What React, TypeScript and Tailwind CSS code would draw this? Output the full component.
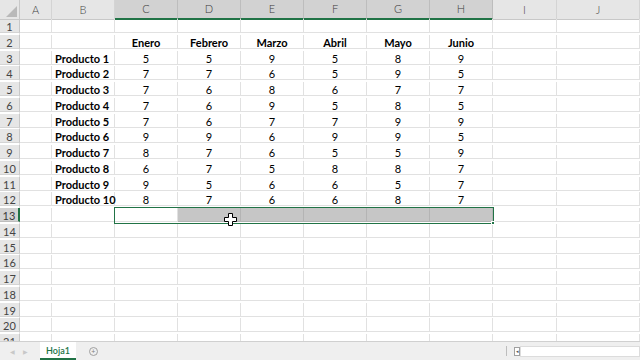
import React from "react";

const cols = ["A", "B", "C", "D", "E", "F", "G", "H", "I", "J", ""];
const months = ["Enero", "Febrero", "Marzo", "Abril", "Mayo", "Junio"];
const data = [
  [5, 5, 9, 5, 8, 9],
  [7, 7, 6, 5, 9, 5],
  [7, 6, 8, 6, 7, 7],
  [7, 6, 9, 5, 8, 5],
  [7, 6, 7, 7, 9, 9],
  [9, 9, 6, 9, 9, 5],
  [8, 7, 6, 5, 5, 9],
  [6, 7, 5, 8, 8, 7],
  [9, 5, 6, 6, 5, 7],
  [8, 7, 6, 6, 8, 7],
];

const gridCols = "grid grid-cols-[20px_32px_63px_63px_63px_63px_63px_63px_63px_64px_1fr]";

function cellContent(r: number, c: number): { text: string; bold?: boolean; left?: boolean } {
  if (r === 2 && c >= 2 && c <= 7) return { text: months[c - 2], bold: true };
  if (r >= 3 && r <= 12) {
    if (c === 1) return { text: `Producto ${r - 2}`, bold: true, left: true };
    if (c >= 2 && c <= 7) return { text: String(data[r - 3][c - 2]) };
  }
  return { text: "" };
}

export default function App() {
  const rows = Array.from({ length: 21 }, (_, i) => i + 1);
  return (
    <div className="w-[640px] h-[360px] overflow-hidden bg-white flex flex-col" style={{ fontFamily: "Lato, 'Open Sans', 'Liberation Sans', sans-serif" }}>
      <div className="relative h-[341px] overflow-hidden">
        <div className={`${gridCols} h-[19px] bg-[#e6e6e6]`}>
          <div className="relative border-r border-b border-[#c8c8c8]">
            <div className="absolute right-[2px] bottom-[2px] w-0 h-0 border-l-[11px] border-l-transparent border-b-[11px] border-b-[#b9b9b9]" />
          </div>
          {cols.map((c, i) => {
            const sel = i >= 2 && i <= 7;
            return (
              <div
                key={i}
                className={`flex items-center justify-center pt-[1px] text-[11px] font-light ${sel ? "bg-[#d2d2d2] text-[#3a3a3a] border-b-2 border-b-[#217346] border-r border-r-[#bdbdbd]" : "text-[#444] border-b border-b-[#c8c8c8] border-r border-r-[#d4d4d4]"}`}
              >
                {c}
              </div>
            );
          })}
        </div>
        {rows.map((r) => {
          const selRow = r === 13;
          return (
            <div key={r} className={`${gridCols} h-[15.75px]`}>
              <div
                className={`flex items-center justify-center pt-[2px] text-[11px] leading-none ${selRow ? "bg-[#d2d2d2] text-[#3a3a3a] border-r-2 border-r-[#217346] border-b border-b-[#bdbdbd]" : "bg-[#e6e6e6] text-[#444] border-r border-r-[#c8c8c8] border-b border-b-[#d4d4d4]"}`}
              >
                {r}
              </div>
              {cols.map((_, c) => {
                const cc = cellContent(r, c);
                const fill = selRow && c >= 3 && c <= 7;
                return (
                  <div
                    key={c}
                    className={`flex items-center pt-[2px] whitespace-nowrap overflow-visible text-[11px] text-black leading-none border-r border-b ${fill ? "bg-[#c6c6c6] border-[#b4b4b4]" : "border-[#e1e1e1]"} ${cc.left ? "justify-start pl-[3px]" : "justify-center"} ${cc.bold ? "font-bold" : ""}`}
                  >
                    {cc.text}
                  </div>
                );
              })}
            </div>
          );
        })}
        <div className="absolute left-[114px] top-[206.5px] w-[380px] h-[17.75px] border border-[#217346] pointer-events-none" />
        <div className="absolute left-[491px] top-[221px] w-[4px] h-[4px] bg-[#217346] border border-white" />
        <svg className="absolute left-[224px] top-[213px]" width="13" height="13" viewBox="0 0 13 13">
          <path d="M4.5 0.5 H8.5 V4.5 H12.5 V8.5 H8.5 V12.5 H4.5 V8.5 H0.5 V4.5 H4.5 Z" fill="white" stroke="black" strokeWidth="1" />
        </svg>
      </div>
      <div className="h-[19px] bg-[#efefef] border-t border-[#d0d0d0] flex items-center relative">
        <div className="flex items-center gap-[8px] pl-[10px] text-[6px] text-[#c8c8c8]">
          <span>◀</span>
          <span>▶</span>
        </div>
        <div className="ml-[12px] h-full bg-white px-[6px] flex flex-col items-center justify-center border-b-2 border-[#217346]">
          <span className="text-[9px] font-semibold text-[#217346] leading-none">Hoja1</span>
        </div>
        <div className="ml-[13px] w-[9px] h-[9px] rounded-full border border-[#a0a0a0] flex items-center justify-center text-[7px] text-[#808080] leading-none">+</div>
        <div className="ml-auto flex items-center h-full">
          <div className="w-px h-[10px] bg-[#bdbdbd] mr-[7px]" />
          <div className="w-[6px] h-[9px] border border-[#a0a0a0] bg-white flex items-center justify-center text-[5px] text-[#555] leading-none">◂</div>
          <div className="w-[120px] h-[11px] bg-white border border-[#dcdcdc]" />
        </div>
      </div>
    </div>
  );
}
